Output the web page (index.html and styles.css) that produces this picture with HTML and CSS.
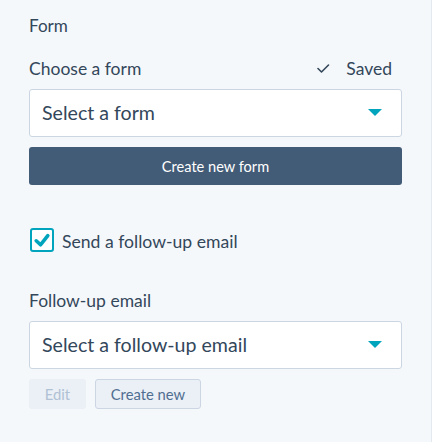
FILE: index.html
```html
<!DOCTYPE html>
<html>
<head>
<meta charset="utf-8">
<link rel="stylesheet" href="styles.css">
</head>
<body>
<div class="panel">
  <div class="section-title">Form</div>
  <div class="label-row">
    <span class="label">Choose a form</span>
    <span class="saved">
      <svg class="saved-check" width="13" height="10" viewBox="0 0 13 10"><path d="M1 4.5 L4.5 8 L11.5 1" fill="none" stroke="#33475b" stroke-width="1.6" stroke-linecap="round" stroke-linejoin="round"/></svg>
      <span>Saved</span>
    </span>
  </div>
  <div class="select">
    <span class="select-text">Select a form</span>
    <span class="caret"></span>
  </div>
  <button class="primary-btn">Create new form</button>

  <label class="check-row">
    <span class="checkbox">
      <svg width="20" height="20" viewBox="0 0 20 20"><path d="M4.2 10.8 L8.5 14.8 L15.8 5.6" fill="none" stroke="#00a4bd" stroke-width="3.6" stroke-linecap="round" stroke-linejoin="round"/></svg>
    </span>
    <span class="check-label">Send a follow-up email</span>
  </label>

  <div class="label followup-label">Follow-up email</div>
  <div class="select select-2">
    <span class="select-text">Select a follow-up email</span>
    <span class="caret"></span>
  </div>
  <div class="btn-row">
    <button class="sec-btn disabled">Edit</button>
    <button class="sec-btn create">Create new</button>
  </div>
</div>
</body>
</html>
```
FILE: styles.css
```css
html, body {
  margin: 0;
  padding: 0;
  background: #f5f8fa;
}
body {
  font-family: Lato, "Open Sans", sans-serif;
  color: #33475b;
}
.panel {
  box-sizing: border-box;
  width: 432px;
  height: 442px;
  padding: 15.5px 29px 0 29px;
  border-right: 1px solid #e3e9ef;
}
.section-title {
  font-size: 17.1px;
  line-height: 20px;
  margin-bottom: 23.7px;
}
.label-row {
  display: flex;
  justify-content: space-between;
  align-items: center;
}
.label {
  font-size: 17.5px;
  line-height: 20px;
}
.saved {
  font-size: 17.5px;
  line-height: 20px;
  display: flex;
  align-items: center;
  gap: 16px;
  margin-right: 10px;
}
.saved-check {
  display: block;
  margin-top: -1px;
}
.select {
  box-sizing: border-box;
  height: 48px;
  margin-top: 10px;
  background: #fff;
  border: 1px solid #cbd6e2;
  border-radius: 3px;
  display: flex;
  align-items: center;
  justify-content: space-between;
  padding: 0 19px 2px 12px;
}
.select-text {
  font-size: 19.6px;
  color: #33475b;
}
.caret {
  width: 0;
  height: 0;
  margin-top: 1px;
  border-left: 7px solid transparent;
  border-right: 7px solid transparent;
  border-top: 7px solid #00a4bd;
}
.primary-btn {
  display: block;
  box-sizing: border-box;
  width: 100%;
  height: 38px;
  margin-top: 10px;
  padding: 0;
  background: #425b76;
  border: none;
  border-radius: 3px;
  color: #fff;
  font-family: inherit;
  font-size: 14.6px;
}
.check-row {
  display: flex;
  align-items: flex-start;
  gap: 8px;
  margin-top: 43px;
  margin-left: 1px;
}
.checkbox {
  box-sizing: border-box;
  width: 24px;
  height: 24px;
  border: 2px solid #00a4bd;
  border-radius: 3px;
  background: #fff;
  display: flex;
  align-items: center;
  justify-content: center;
}
.checkbox svg {
  display: block;
}
.check-label {
  font-size: 17.6px;
  line-height: 20px;
  margin-top: 3.5px;
}
.followup-label {
  margin-top: 38.5px;
}
.select-2 {
  margin-top: 10.5px;
}
.btn-row {
  display: flex;
  gap: 9px;
  margin-top: 10px;
}
.sec-btn {
  box-sizing: border-box;
  height: 30px;
  padding: 0;
  background: #eaf0f6;
  border: 1px solid #cbd6e2;
  border-radius: 3px;
  color: #506e91;
  font-family: inherit;
  font-size: 14.8px;
}
.sec-btn.create {
  width: 106px;
}
.sec-btn.disabled {
  width: 57px;
  border-color: #eaf0f6;
  color: #b0c1d4;
}
```
